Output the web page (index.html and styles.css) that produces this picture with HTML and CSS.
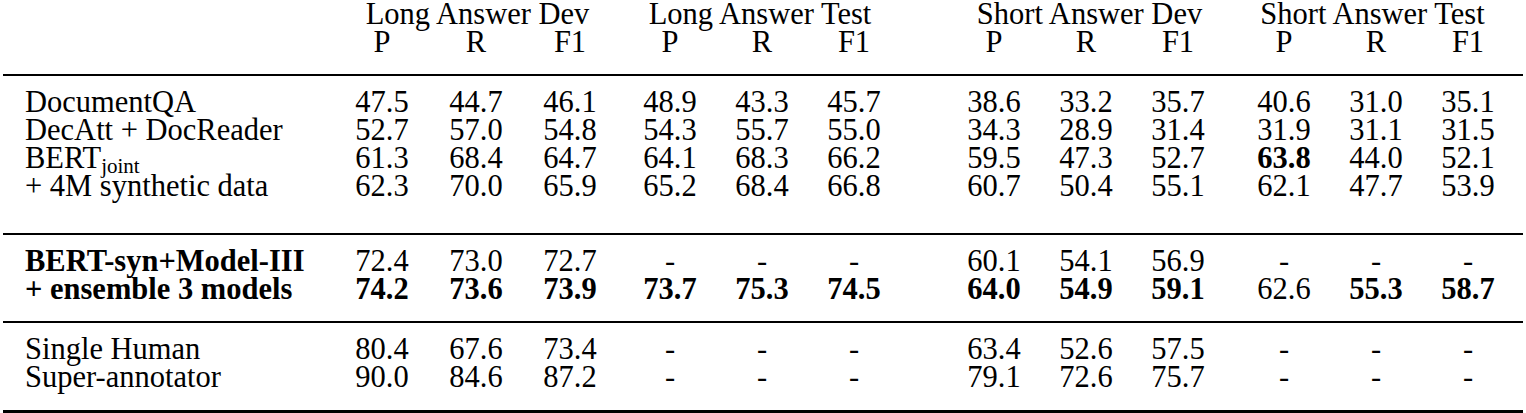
FILE: index.html
```html
<!DOCTYPE html>
<html lang="en">
<head>
<meta charset="UTF-8">
<meta name="viewport" content="width=device-width, initial-scale=1.0">
<title>Natural Questions results</title>
<link rel="stylesheet" href="styles.css">
</head>
<body>

<!-- Tabla de resultados -->
<table class="tabla">
    <colgroup>
        <col class="c-label">
        <col class="c-94"><col class="c-94"><col class="c-97">
        <col class="c-96"><col class="c-92"><col class="c-92">
        <col class="c-gap">
        <col class="c-92"><col class="c-92"><col class="c-99">
        <col class="c-99"><col class="c-92"><col class="c-92">
        <col class="c-end">
    </colgroup>
    <thead>
        <tr class="grupos">
            <td></td>
            <td colspan="3">Long Answer Dev</td>
            <td colspan="3">Long Answer Test</td>
            <td></td>
            <td colspan="3">Short Answer Dev</td>
            <td colspan="3">Short Answer Test</td>
            <td></td>
        </tr>
        <tr class="fila regla">
            <td></td>
            <td>P</td><td>R</td><td>F1</td>
            <td>P</td><td>R</td><td>F1</td>
            <td></td>
            <td>P</td><td>R</td><td>F1</td>
            <td>P</td><td>R</td><td>F1</td>
            <td></td>
        </tr>
    </thead>
    <tbody>
        <tr class="fila primera">
            <td>DocumentQA</td>
            <td>47.5</td><td>44.7</td><td>46.1</td>
            <td>48.9</td><td>43.3</td><td>45.7</td>
            <td></td>
            <td>38.6</td><td>33.2</td><td>35.7</td>
            <td>40.6</td><td>31.0</td><td>35.1</td>
            <td></td>
        </tr>
        <tr class="fila">
            <td>DecAtt + DocReader</td>
            <td>52.7</td><td>57.0</td><td>54.8</td>
            <td>54.3</td><td>55.7</td><td>55.0</td>
            <td></td>
            <td>34.3</td><td>28.9</td><td>31.4</td>
            <td>31.9</td><td>31.1</td><td>31.5</td>
            <td></td>
        </tr>
        <tr class="fila">
            <td>BERT<sub>joint</sub></td>
            <td>61.3</td><td>68.4</td><td>64.7</td>
            <td>64.1</td><td>68.3</td><td>66.2</td>
            <td></td>
            <td>59.5</td><td>47.3</td><td>52.7</td>
            <td><b>63.8</b></td><td>44.0</td><td>52.1</td>
            <td></td>
        </tr>
        <tr class="fila regla extra">
            <td>+ 4M synthetic data</td>
            <td>62.3</td><td>70.0</td><td>65.9</td>
            <td>65.2</td><td>68.4</td><td>66.8</td>
            <td></td>
            <td>60.7</td><td>50.4</td><td>55.1</td>
            <td>62.1</td><td>47.7</td><td>53.9</td>
            <td></td>
        </tr>
        <tr class="fila primera">
            <td><b>BERT-syn+Model-III</b></td>
            <td>72.4</td><td>73.0</td><td>72.7</td>
            <td>-</td><td>-</td><td>-</td>
            <td></td>
            <td>60.1</td><td>54.1</td><td>56.9</td>
            <td>-</td><td>-</td><td>-</td>
            <td></td>
        </tr>
        <tr class="fila regla">
            <td><b>+ ensemble 3 models</b></td>
            <td><b>74.2</b></td><td><b>73.6</b></td><td><b>73.9</b></td>
            <td><b>73.7</b></td><td><b>75.3</b></td><td><b>74.5</b></td>
            <td></td>
            <td><b>64.0</b></td><td><b>54.9</b></td><td><b>59.1</b></td>
            <td>62.6</td><td><b>55.3</b></td><td><b>58.7</b></td>
            <td></td>
        </tr>
        <tr class="fila primera">
            <td>Single Human</td>
            <td>80.4</td><td>67.6</td><td>73.4</td>
            <td>-</td><td>-</td><td>-</td>
            <td></td>
            <td>63.4</td><td>52.6</td><td>57.5</td>
            <td>-</td><td>-</td><td>-</td>
            <td></td>
        </tr>
        <tr class="fila final">
            <td>Super-annotator</td>
            <td>90.0</td><td>84.6</td><td>87.2</td>
            <td>-</td><td>-</td><td>-</td>
            <td></td>
            <td>79.1</td><td>72.6</td><td>75.7</td>
            <td>-</td><td>-</td><td>-</td>
            <td></td>
        </tr>
    </tbody>
</table>

</body>
</html>
```

FILE: styles.css
```css
body {
    margin: 0;
    padding: 0;
    background: #fff;
}

.tabla {
    margin-left: 3px;
    width: 1520px;
    table-layout: fixed;
    border-collapse: separate;
    border-spacing: 0;
    font-family: "Liberation Serif", Tinos, "Nimbus Roman", "DejaVu Serif", serif;
    font-size: 30.5px;
    line-height: 28px;
    color: #000;
}

/* Anchos de columna */
.c-label { width: 332px; }
.c-92 { width: 92px; }
.c-94 { width: 94px; }
.c-96 { width: 96px; }
.c-97 { width: 97px; }
.c-99 { width: 99px; }
.c-gap { width: 48px; }
.c-end { width: 9px; }

.tabla td {
    padding: 0;
    text-align: center;
    white-space: nowrap;
    vertical-align: top;
}

.tabla b {
    font-weight: bold;
}

/* Primera columna: nombres de modelos */
.fila td:first-child {
    text-align: left;
    padding-left: 22px;
}

/* Ajustes finos de centrado */
.fila td:nth-child(4) { padding-right: 3px; }
.fila td:nth-child(5) { padding-left: 4px; }
.fila td:nth-child(11) { padding-right: 7px; }
.fila td:nth-child(12) { padding-left: 7px; }

.grupos td {
    height: 27px;
}

.primera td {
    padding-top: 12px;
}

.regla td {
    padding-bottom: 18px;
    border-bottom: 2px solid #000;
}

.extra td {
    padding-bottom: 33px;
}

.final td {
    padding-bottom: 19px;
    border-bottom: 4px solid #000;
}

sub {
    font-size: 21px;
    line-height: 0;
    vertical-align: -5px;
}
```
